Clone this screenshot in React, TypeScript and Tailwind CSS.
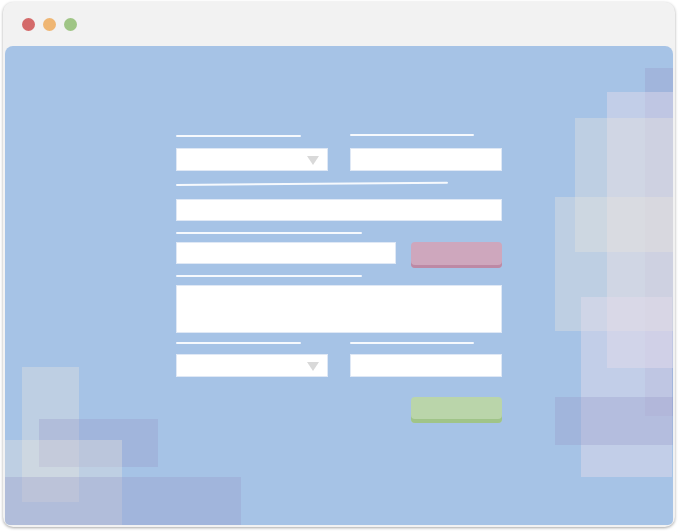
import React from 'react';

type Tone = 'mist' | 'lilac' | 'plum';

const toneClass: Record<Tone, string> = {
  mist: 'bg-[rgba(235,230,220,0.35)]',
  lilac: 'bg-[rgba(228,220,236,0.45)]',
  plum: 'bg-[rgba(150,150,200,0.3)]',
};

// decorative tiles, coordinates relative to the blue canvas
const tiles: { x: number; y: number; w: number; h: number; tone: Tone }[] = [
  { x: 640, y: 22, w: 28, h: 348, tone: 'plum' },
  { x: 602, y: 46, w: 66, h: 276, tone: 'lilac' },
  { x: 570, y: 72, w: 98, h: 134, tone: 'mist' },
  { x: 550, y: 151, w: 118, h: 134, tone: 'mist' },
  { x: 576, y: 251, w: 91, h: 180, tone: 'lilac' },
  { x: 550, y: 351, w: 118, h: 48, tone: 'plum' },
  { x: 17, y: 321, w: 57, h: 135, tone: 'mist' },
  { x: 34, y: 373, w: 119, h: 48, tone: 'plum' },
  { x: 0, y: 394, w: 117, h: 85, tone: 'mist' },
  { x: 0, y: 431, w: 236, h: 48, tone: 'plum' },
];

const Line = ({ className = '' }: { className?: string }) => (
  <div className={`h-[2px] bg-white/90 rounded-full ${className}`} />
);

const Field = ({ className = '' }: { className?: string }) => (
  <div className={`bg-white border border-[#dfe8f5] ${className}`} />
);

const Select = () => (
  <div className="relative h-[23px] bg-white border border-[#dfe8f5]">
    <svg className="absolute right-[8px] top-[7px]" width="12" height="9" viewBox="0 0 12 9">
      <path d="M0 0h12L6 9z" fill="#d9d9d9" />
    </svg>
  </div>
);

const Button = ({ tone }: { tone: 'pink' | 'green' }) => (
  <div
    className={`w-[91px] h-[26px] rounded-[4px] ${
      tone === 'pink'
        ? 'bg-[#cea7bd] shadow-[inset_0_-3px_0_#bd89a5]'
        : 'bg-[#bad5aa] shadow-[inset_0_-4px_0_#a0c488]'
    }`}
  />
);

export default function App() {
  return (
    <div className="w-[678px] h-[532px] bg-white pt-[2px] pl-[3px]">
      <div className="w-[672px] h-[525px] bg-[#f2f2f2] rounded-[10px] shadow-[0_1px_3px_rgba(0,0,0,0.35)] flex flex-col px-[2px] pb-[2px]">
        <div className="h-[44px] flex items-center gap-[8px] pl-[17px] pt-px">
          <span className="w-[13px] h-[13px] rounded-full bg-[#d46a6a]" />
          <span className="w-[13px] h-[13px] rounded-full bg-[#efb673]" />
          <span className="w-[13px] h-[13px] rounded-full bg-[#9fc585]" />
        </div>

        <div className="relative flex-1 bg-[#a6c3e6] rounded-[8px] rounded-b-[5px] overflow-hidden">
          {tiles.map((t, i) => (
            <div
              key={i}
              className={`absolute ${toneClass[t.tone]}`}
              style={{ left: t.x, top: t.y, width: t.w, height: t.h }}
            />
          ))}

          <div className="relative ml-[171px] pt-[88px] w-[326px] flex flex-col">
            <div className="grid grid-cols-[152px_152px] gap-x-[22px]">
              <div className="flex flex-col">
                <Line className="w-[125px] mt-px" />
                <div className="mt-[11px]"><Select /></div>
              </div>
              <div className="flex flex-col">
                <Line className="w-[124px]" />
                <Field className="mt-[12px] h-[23px]" />
              </div>
            </div>

            <Line className="w-[272px] mt-[13px] origin-left -rotate-[0.5deg]" />
            <Field className="mt-[13px] h-[22px]" />

            <Line className="w-[186px] mt-[11px]" />
            <div className="mt-[8px] flex items-start gap-[15px]">
              <Field className="w-[220px] h-[22px]" />
              <Button tone="pink" />
            </div>

            <Line className="w-[186px] mt-[7px]" />
            <Field className="mt-[8px] h-[48px]" />

            <div className="mt-[9px] grid grid-cols-[152px_152px] gap-x-[22px]">
              <div className="flex flex-col">
                <Line className="w-[125px]" />
                <div className="mt-[10px]"><Select /></div>
              </div>
              <div className="flex flex-col">
                <Line className="w-[124px]" />
                <Field className="mt-[10px] h-[23px]" />
              </div>
            </div>

            <div className="mt-[20px] flex justify-end">
              <Button tone="green" />
            </div>
          </div>
        </div>
      </div>
    </div>
  );
}
